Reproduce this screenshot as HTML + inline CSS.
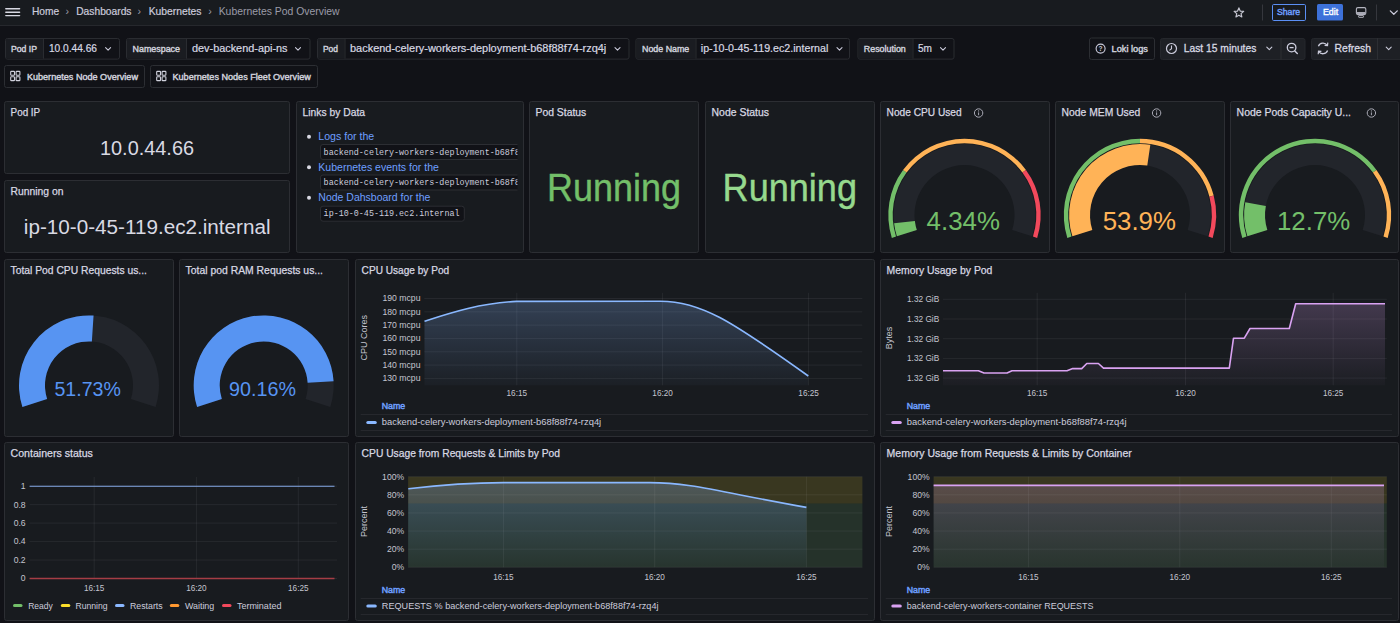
<!DOCTYPE html>
<html><head><meta charset="utf-8"><title>Kubernetes Pod Overview</title>
<style>html,body{margin:0;padding:0;background:#111217;overflow:hidden;width:1400px;height:623px}svg{display:block}text{white-space:pre}</style>
</head><body>
<svg width="1400" height="623" viewBox="0 0 1400 623"><rect x="0" y="0" width="1400" height="623" fill="#111217"/>
<rect x="0" y="0" width="1400" height="25" rx="0" fill="#181b1f" />
<line x1="0" y1="25.5" x2="1400" y2="25.5" stroke="#26282d" stroke-width="1" />
<line x1="5.8" y1="8.8" x2="19.6" y2="8.8" stroke="#d8d9e3" stroke-width="1.4" stroke-linecap="round"/>
<line x1="5.8" y1="12.2" x2="19.6" y2="12.2" stroke="#d8d9e3" stroke-width="1.4" stroke-linecap="round"/>
<line x1="5.8" y1="15.6" x2="19.6" y2="15.6" stroke="#d8d9e3" stroke-width="1.4" stroke-linecap="round"/>
<text x="31.9" y="15.3" font-family="Liberation Sans" font-size="10.6" fill="#ccccdc" font-weight="400" text-anchor="start" textLength="27.20" lengthAdjust="spacingAndGlyphs" stroke="#ccccdc" stroke-width="0.2">Home</text>
<text x="65.5" y="15.3" font-family="Liberation Sans" font-size="10.6" fill="#9b9ca8" font-weight="400" text-anchor="start" >›</text>
<text x="76.2" y="15.3" font-family="Liberation Sans" font-size="10.6" fill="#ccccdc" font-weight="400" text-anchor="start" textLength="55.30" lengthAdjust="spacingAndGlyphs" stroke="#ccccdc" stroke-width="0.2">Dashboards</text>
<text x="137.6" y="15.3" font-family="Liberation Sans" font-size="10.6" fill="#9b9ca8" font-weight="400" text-anchor="start" >›</text>
<text x="148.7" y="15.3" font-family="Liberation Sans" font-size="10.6" fill="#ccccdc" font-weight="400" text-anchor="start" textLength="52.80" lengthAdjust="spacingAndGlyphs" stroke="#ccccdc" stroke-width="0.2">Kubernetes</text>
<text x="208.3" y="15.3" font-family="Liberation Sans" font-size="10.6" fill="#9b9ca8" font-weight="400" text-anchor="start" >›</text>
<text x="218.7" y="15.3" font-family="Liberation Sans" font-size="10.6" fill="#9b9ca8" font-weight="400" text-anchor="start" textLength="120.80" lengthAdjust="spacingAndGlyphs" >Kubernetes Pod Overview</text>
<polygon points="1238.90,7.90 1240.22,11.08 1243.66,11.35 1241.04,13.60 1241.84,16.95 1238.90,15.15 1235.96,16.95 1236.76,13.60 1234.14,11.35 1237.58,11.08" fill="none" stroke="#c4c5d0" stroke-width="1.2" stroke-linejoin="round"/>
<line x1="1262.5" y1="4.5" x2="1262.5" y2="20.5" stroke="#35373d" stroke-width="1" />
<rect x="1272.5" y="4.5" width="33" height="16" rx="1.2" fill="none" stroke="#5b8ff5" stroke-width="1" />
<text x="1276.9" y="15.4" font-family="Liberation Sans" font-size="8.4" fill="#6e9fff" font-weight="400" text-anchor="start" textLength="23.30" lengthAdjust="spacingAndGlyphs" stroke="#6e9fff" stroke-width="0.4">Share</text>
<rect x="1317" y="4" width="26" height="16.6" rx="1.5" fill="#3d71d9" />
<text x="1322.9" y="15.4" font-family="Liberation Sans" font-size="8.8" fill="#ffffff" font-weight="400" text-anchor="start" textLength="15.20" lengthAdjust="spacingAndGlyphs" stroke="#ffffff" stroke-width="0.35">Edit</text>
<rect x="1356.4" y="7.6" width="9.4" height="7" rx="1.5" fill="none" stroke="#b4b5c0" stroke-width="1.1"/>
<rect x="1356.8" y="12" width="8.6" height="2.1" fill="#a9aab5"/>
<rect x="1358.6" y="15.6" width="4.9" height="1.8" rx="0.5" fill="none" stroke="#b4b5c0" stroke-width="0.9"/>
<line x1="1376.5" y1="4.5" x2="1376.5" y2="20.5" stroke="#35373d" stroke-width="1" />
<polyline points="1390.3,10.9 1393.8,14.2 1397.3,10.9" fill="none" stroke="#ccccdc" stroke-width="1.3" stroke-linecap="round" stroke-linejoin="round"/>
<rect x="5.5" y="38.5" width="114" height="20.6" rx="2" fill="#111217" stroke="#2a2c31" stroke-width="1" />
<rect x="6" y="39" width="37" height="19.6" fill="#1a1c21"/>
<line x1="43.5" y1="39" x2="43.5" y2="58.6" stroke="#2a2c31" stroke-width="1" />
<text x="11" y="51.9" font-family="Liberation Sans" font-size="8.6" fill="#d0d1dc" font-weight="400" text-anchor="start" textLength="26.00" lengthAdjust="spacingAndGlyphs" stroke="#d0d1dc" stroke-width="0.4">Pod IP</text>
<text x="48.9" y="52.0" font-family="Liberation Sans" font-size="10.8" fill="#d8d9e3" font-weight="400" text-anchor="start" textLength="48.10" lengthAdjust="spacingAndGlyphs" stroke="#d8d9e3" stroke-width="0.2">10.0.44.66</text>
<polyline points="105.60,47.70 108.10,50.10 110.60,47.70" fill="none" stroke="#ccccdc" stroke-width="1.1" stroke-linecap="round" stroke-linejoin="round"/>
<rect x="126.5" y="38.5" width="183.5" height="20.6" rx="2" fill="#111217" stroke="#2a2c31" stroke-width="1" />
<rect x="127" y="39" width="59" height="19.6" fill="#1a1c21"/>
<line x1="186.5" y1="39" x2="186.5" y2="58.6" stroke="#2a2c31" stroke-width="1" />
<text x="132.5" y="51.9" font-family="Liberation Sans" font-size="8.6" fill="#d0d1dc" font-weight="400" text-anchor="start" textLength="47.50" lengthAdjust="spacingAndGlyphs" stroke="#d0d1dc" stroke-width="0.4">Namespace</text>
<text x="192" y="52.0" font-family="Liberation Sans" font-size="10.8" fill="#d8d9e3" font-weight="400" text-anchor="start" textLength="95.50" lengthAdjust="spacingAndGlyphs" stroke="#d8d9e3" stroke-width="0.2">dev-backend-api-ns</text>
<polyline points="295.50,47.70 298.00,50.10 300.50,47.70" fill="none" stroke="#ccccdc" stroke-width="1.1" stroke-linecap="round" stroke-linejoin="round"/>
<rect x="317.5" y="38.5" width="311.5" height="20.6" rx="2" fill="#111217" stroke="#2a2c31" stroke-width="1" />
<rect x="318" y="39" width="26.5" height="19.6" fill="#1a1c21"/>
<line x1="345.0" y1="39" x2="345.0" y2="58.6" stroke="#2a2c31" stroke-width="1" />
<text x="323" y="51.9" font-family="Liberation Sans" font-size="8.6" fill="#d0d1dc" font-weight="400" text-anchor="start" textLength="15.00" lengthAdjust="spacingAndGlyphs" stroke="#d0d1dc" stroke-width="0.4">Pod</text>
<text x="350" y="52.0" font-family="Liberation Sans" font-size="10.8" fill="#d8d9e3" font-weight="400" text-anchor="start" textLength="256.30" lengthAdjust="spacingAndGlyphs" stroke="#d8d9e3" stroke-width="0.2">backend-celery-workers-deployment-b68f88f74-rzq4j</text>
<polyline points="615.00,47.70 617.50,50.10 620.00,47.70" fill="none" stroke="#ccccdc" stroke-width="1.1" stroke-linecap="round" stroke-linejoin="round"/>
<rect x="636.0" y="38.5" width="213.5" height="20.6" rx="2" fill="#111217" stroke="#2a2c31" stroke-width="1" />
<rect x="636.5" y="39" width="59.0" height="19.6" fill="#1a1c21"/>
<line x1="696.0" y1="39" x2="696.0" y2="58.6" stroke="#2a2c31" stroke-width="1" />
<text x="642" y="51.9" font-family="Liberation Sans" font-size="8.6" fill="#d0d1dc" font-weight="400" text-anchor="start" textLength="47.30" lengthAdjust="spacingAndGlyphs" stroke="#d0d1dc" stroke-width="0.4">Node Name</text>
<text x="700.8" y="52.0" font-family="Liberation Sans" font-size="10.8" fill="#d8d9e3" font-weight="400" text-anchor="start" textLength="127.50" lengthAdjust="spacingAndGlyphs" stroke="#d8d9e3" stroke-width="0.2">ip-10-0-45-119.ec2.internal</text>
<polyline points="837.00,47.70 839.50,50.10 842.00,47.70" fill="none" stroke="#ccccdc" stroke-width="1.1" stroke-linecap="round" stroke-linejoin="round"/>
<rect x="858.0" y="38.5" width="96.0" height="20.6" rx="2" fill="#111217" stroke="#2a2c31" stroke-width="1" />
<rect x="858.5" y="39" width="54.0" height="19.6" fill="#1a1c21"/>
<line x1="913.0" y1="39" x2="913.0" y2="58.6" stroke="#2a2c31" stroke-width="1" />
<text x="863.8" y="51.9" font-family="Liberation Sans" font-size="8.6" fill="#d0d1dc" font-weight="400" text-anchor="start" textLength="42.00" lengthAdjust="spacingAndGlyphs" stroke="#d0d1dc" stroke-width="0.4">Resolution</text>
<text x="918" y="52.0" font-family="Liberation Sans" font-size="10.8" fill="#d8d9e3" font-weight="400" text-anchor="start" textLength="14.00" lengthAdjust="spacingAndGlyphs" stroke="#d8d9e3" stroke-width="0.2">5m</text>
<polyline points="940.50,47.70 943.00,50.10 945.50,47.70" fill="none" stroke="#ccccdc" stroke-width="1.1" stroke-linecap="round" stroke-linejoin="round"/>
<rect x="1089.5" y="38" width="65" height="21.5" rx="2" fill="#111217" stroke="#2c2e33" stroke-width="1" />
<circle cx="1100.6" cy="48.6" r="4.5" fill="none" stroke="#ccccdc" stroke-width="1.1"/>
<text x="1098.4" y="51.2" font-family="Liberation Sans" font-size="6.6" fill="#ccccdc" font-weight="700" text-anchor="start" >?</text>
<text x="1111.5" y="52" font-family="Liberation Sans" font-size="8.8" fill="#d0d1dc" font-weight="400" text-anchor="start" textLength="36.50" lengthAdjust="spacingAndGlyphs" stroke="#d0d1dc" stroke-width="0.4">Loki logs</text>
<rect x="1160.5" y="38.5" width="144.5" height="21" rx="2" fill="#1e2025" stroke="#25272c" stroke-width="1" />
<line x1="1281" y1="38" x2="1281" y2="59.6" stroke="#2c2e33" stroke-width="1" />
<circle cx="1171.5" cy="48.5" r="5" fill="none" stroke="#ccccdc" stroke-width="1.2"/>
<polyline points="1171.5,45.5 1171.5,48.7 1169.4,50.4" fill="none" stroke="#ccccdc" stroke-width="1.1"/>
<text x="1183.8" y="52.2" font-family="Liberation Sans" font-size="10.8" fill="#d8d9e3" font-weight="400" text-anchor="start" textLength="72.50" lengthAdjust="spacingAndGlyphs" stroke="#d8d9e3" stroke-width="0.3">Last 15 minutes</text>
<polyline points="1266.80,47.20 1269.30,49.60 1271.80,47.20" fill="none" stroke="#ccccdc" stroke-width="1.1" stroke-linecap="round" stroke-linejoin="round"/>
<circle cx="1291.6" cy="47.6" r="4.3" fill="none" stroke="#ccccdc" stroke-width="1.3"/>
<line x1="1289.6" y1="47.6" x2="1293.6" y2="47.6" stroke="#ccccdc" stroke-width="1.3" />
<line x1="1294.8" y1="50.9" x2="1297.3" y2="53.5" stroke="#ccccdc" stroke-width="1.4" stroke-linecap="round"/>
<rect x="1311.5" y="38.5" width="100" height="21" rx="2" fill="#1e2025" stroke="#25272c" stroke-width="1" />
<line x1="1377.5" y1="38" x2="1377.5" y2="59.6" stroke="#2c2e33" stroke-width="1" />
<path d="M1318.4,46.2 A5,5 0 0 1 1327.2,45.3 M1327.6,50.6 A5,5 0 0 1 1318.8,51.5" fill="none" stroke="#ccccdc" stroke-width="1.3"/>
<polyline points="1327.8,42.6 1327.5,45.6 1324.6,45.4" fill="none" stroke="#ccccdc" stroke-width="1.2"/>
<polyline points="1318.2,54.2 1318.5,51.2 1321.4,51.4" fill="none" stroke="#ccccdc" stroke-width="1.2"/>
<text x="1334.6" y="52.1" font-family="Liberation Sans" font-size="10.8" fill="#d8d9e3" font-weight="400" text-anchor="start" textLength="36.40" lengthAdjust="spacingAndGlyphs" stroke="#d8d9e3" stroke-width="0.3">Refresh</text>
<polyline points="1386.20,47.20 1388.70,49.60 1391.20,47.20" fill="none" stroke="#ccccdc" stroke-width="1.1" stroke-linecap="round" stroke-linejoin="round"/>
<rect x="4.5" y="65.5" width="140" height="22" rx="2" fill="#111217" stroke="#2c2e33" stroke-width="1" />
<rect x="10.7" y="71.4" width="3.8" height="3.8" rx="0.7" fill="none" stroke="#d0d1dc" stroke-width="1.1"/>
<rect x="10.7" y="76.80000000000001" width="3.8" height="3.8" rx="0.7" fill="none" stroke="#d0d1dc" stroke-width="1.1"/>
<rect x="16.1" y="71.4" width="3.8" height="3.8" rx="0.7" fill="none" stroke="#d0d1dc" stroke-width="1.1"/>
<rect x="16.1" y="76.80000000000001" width="3.8" height="3.8" rx="0.7" fill="none" stroke="#d0d1dc" stroke-width="1.1"/>
<text x="26.9" y="79.6" font-family="Liberation Sans" font-size="8.6" fill="#d0d1dc" font-weight="400" text-anchor="start" textLength="111.10" lengthAdjust="spacingAndGlyphs" stroke="#d0d1dc" stroke-width="0.4">Kubernetes Node Overview</text>
<rect x="150.5" y="65.5" width="167" height="22" rx="2" fill="#111217" stroke="#2c2e33" stroke-width="1" />
<rect x="156.7" y="71.4" width="3.8" height="3.8" rx="0.7" fill="none" stroke="#d0d1dc" stroke-width="1.1"/>
<rect x="156.7" y="76.80000000000001" width="3.8" height="3.8" rx="0.7" fill="none" stroke="#d0d1dc" stroke-width="1.1"/>
<rect x="162.1" y="71.4" width="3.8" height="3.8" rx="0.7" fill="none" stroke="#d0d1dc" stroke-width="1.1"/>
<rect x="162.1" y="76.80000000000001" width="3.8" height="3.8" rx="0.7" fill="none" stroke="#d0d1dc" stroke-width="1.1"/>
<text x="172.5" y="79.6" font-family="Liberation Sans" font-size="8.6" fill="#d0d1dc" font-weight="400" text-anchor="start" textLength="138.30" lengthAdjust="spacingAndGlyphs" stroke="#d0d1dc" stroke-width="0.4">Kubernetes Nodes Fleet Overview</text>
<rect x="4.5" y="101.5" width="285" height="72" rx="2" fill="#181b1f" stroke="#2c2e33" stroke-width="1" />
<text x="10.6" y="115.6" font-family="Liberation Sans" font-size="10.6" fill="#d8d9e3" font-weight="400" text-anchor="start" textLength="29.60" lengthAdjust="spacingAndGlyphs" stroke="#d8d9e3" stroke-width="0.25">Pod IP</text>
<text x="100" y="155.4" font-family="Liberation Sans" font-size="20" fill="#d8d9e3" font-weight="400" text-anchor="start" textLength="94.00" lengthAdjust="spacingAndGlyphs" >10.0.44.66</text>
<rect x="4.5" y="180.5" width="285" height="72" rx="2" fill="#181b1f" stroke="#2c2e33" stroke-width="1" />
<text x="10.6" y="194.6" font-family="Liberation Sans" font-size="10.6" fill="#d8d9e3" font-weight="400" text-anchor="start" textLength="52.90" lengthAdjust="spacingAndGlyphs" stroke="#d8d9e3" stroke-width="0.25">Running on</text>
<text x="23.8" y="234" font-family="Liberation Sans" font-size="20" fill="#d8d9e3" font-weight="400" text-anchor="start" textLength="246.80" lengthAdjust="spacingAndGlyphs" >ip-10-0-45-119.ec2.internal</text>
<rect x="296.5" y="101.5" width="227" height="151" rx="2" fill="#181b1f" stroke="#2c2e33" stroke-width="1" />
<text x="302.6" y="115.6" font-family="Liberation Sans" font-size="10.6" fill="#d8d9e3" font-weight="400" text-anchor="start" textLength="62.40" lengthAdjust="spacingAndGlyphs" stroke="#d8d9e3" stroke-width="0.25">Links by Data</text>
<defs><clipPath id="lk"><rect x="297" y="102" width="220.5" height="150"/></clipPath></defs>
<circle cx="309" cy="136.8" r="2" fill="#d8d9e3"/>
<text x="318.3" y="140" font-family="Liberation Sans" font-size="10" fill="#6e9fff" font-weight="400" text-anchor="start" textLength="55.90" lengthAdjust="spacingAndGlyphs" >Logs for the</text>
<g clip-path="url(#lk)">
<rect x="320.5" y="144.5" width="220" height="15" rx="2.5" fill="#111217" stroke="#2c2e33" stroke-width="1" />
<text x="323.6" y="154.6" font-family="Liberation Mono" font-size="8.6" fill="#ccccdc" font-weight="400" text-anchor="start" textLength="246.63" lengthAdjust="spacingAndGlyphs" >backend-celery-workers-deployment-b68f88f74-rzq4j</text>
</g>
<circle cx="309" cy="167.3" r="2" fill="#d8d9e3"/>
<text x="318.3" y="170.5" font-family="Liberation Sans" font-size="10" fill="#6e9fff" font-weight="400" text-anchor="start" textLength="120.60" lengthAdjust="spacingAndGlyphs" >Kubernetes events for the</text>
<g clip-path="url(#lk)">
<rect x="320.5" y="175.0" width="220" height="15" rx="2.5" fill="#111217" stroke="#2c2e33" stroke-width="1" />
<text x="323.6" y="185.1" font-family="Liberation Mono" font-size="8.6" fill="#ccccdc" font-weight="400" text-anchor="start" textLength="246.63" lengthAdjust="spacingAndGlyphs" >backend-celery-workers-deployment-b68f88f74-rzq4j</text>
</g>
<circle cx="309" cy="197.8" r="2" fill="#d8d9e3"/>
<text x="318.3" y="201" font-family="Liberation Sans" font-size="10" fill="#6e9fff" font-weight="400" text-anchor="start" textLength="112.10" lengthAdjust="spacingAndGlyphs" >Node Dahsboard for the</text>
<g clip-path="url(#lk)">
<rect x="320.5" y="206.2" width="143.8" height="15" rx="2.5" fill="#111217" stroke="#2c2e33" stroke-width="1" />
<text x="323.6" y="216.29999999999998" font-family="Liberation Mono" font-size="8.6" fill="#ccccdc" font-weight="400" text-anchor="start" textLength="135.90" lengthAdjust="spacingAndGlyphs" >ip-10-0-45-119.ec2.internal</text>
</g>
<rect x="529.5" y="101.5" width="169" height="151" rx="2" fill="#181b1f" stroke="#2c2e33" stroke-width="1" />
<text x="535.6" y="115.6" font-family="Liberation Sans" font-size="10.6" fill="#d8d9e3" font-weight="400" text-anchor="start" textLength="50.60" lengthAdjust="spacingAndGlyphs" stroke="#d8d9e3" stroke-width="0.25">Pod Status</text>
<text x="547" y="201" font-family="Liberation Sans" font-size="38" fill="#73bf69" font-weight="400" text-anchor="start" textLength="134.00" lengthAdjust="spacingAndGlyphs" stroke="#73bf69" stroke-width="0.4">Running</text>
<rect x="705.5" y="101.5" width="169" height="151" rx="2" fill="#181b1f" stroke="#2c2e33" stroke-width="1" />
<text x="711.6" y="115.6" font-family="Liberation Sans" font-size="10.6" fill="#d8d9e3" font-weight="400" text-anchor="start" textLength="57.40" lengthAdjust="spacingAndGlyphs" stroke="#d8d9e3" stroke-width="0.25">Node Status</text>
<text x="722.6" y="201" font-family="Liberation Sans" font-size="38" fill="#96d98d" font-weight="400" text-anchor="start" textLength="134.40" lengthAdjust="spacingAndGlyphs" stroke="#96d98d" stroke-width="0.4">Running</text>
<rect x="880.5" y="101.5" width="169" height="151" rx="2" fill="#181b1f" stroke="#2c2e33" stroke-width="1" />
<text x="886.6" y="115.6" font-family="Liberation Sans" font-size="10.6" fill="#d8d9e3" font-weight="400" text-anchor="start" textLength="75.00" lengthAdjust="spacingAndGlyphs" stroke="#d8d9e3" stroke-width="0.25">Node CPU Used</text>
<circle cx="978.6" cy="113" r="4.2" fill="none" stroke="#a8a9b4" stroke-width="1"/>
<rect x="978.1" y="112.4" width="1" height="2.8" fill="#a8a9b4"/>
<circle cx="978.6" cy="110.9" r="0.6" fill="#a8a9b4"/>
<path d="M891.83,237.91 A76.2,76.2 0 0 1 903.05,169.94 L906.60,172.54 A71.8,71.8 0 0 0 896.02,236.59 Z" fill="#73bf69"/>
<path d="M903.05,169.94 A76.2,76.2 0 0 1 1025.95,169.94 L1022.40,172.54 A71.8,71.8 0 0 0 906.60,172.54 Z" fill="#ffb357"/>
<path d="M1025.95,169.94 A76.2,76.2 0 0 1 1037.17,237.91 L1032.98,236.59 A71.8,71.8 0 0 0 1022.40,172.54 Z" fill="#f2495c"/>
<path d="M896.88,236.32 A70.9,70.9 0 1 1 1032.12,236.32 L1012.19,230.04 A50,50 0 1 0 916.81,230.04 Z" fill="#22252b"/>
<path d="M896.88,236.32 A70.9,70.9 0 0 1 894.09,223.33 L914.85,220.88 A50,50 0 0 0 916.81,230.04 Z" fill="#73bf69"/>
<text x="926.6" y="230" font-family="Liberation Sans" font-size="26" fill="#73bf69" font-weight="400" text-anchor="start" textLength="73.40" lengthAdjust="spacingAndGlyphs" >4.34%</text>
<rect x="1055.5" y="101.5" width="169" height="151" rx="2" fill="#181b1f" stroke="#2c2e33" stroke-width="1" />
<text x="1061.6" y="115.6" font-family="Liberation Sans" font-size="10.6" fill="#d8d9e3" font-weight="400" text-anchor="start" textLength="78.70" lengthAdjust="spacingAndGlyphs" stroke="#d8d9e3" stroke-width="0.25">Node MEM Used</text>
<circle cx="1156.6" cy="113" r="4.2" fill="none" stroke="#a8a9b4" stroke-width="1"/>
<rect x="1156.1" y="112.4" width="1" height="2.8" fill="#a8a9b4"/>
<circle cx="1156.6" cy="110.9" r="0.6" fill="#a8a9b4"/>
<path d="M1067.33,237.91 A76.2,76.2 0 0 1 1140.00,138.80 L1140.00,143.20 A71.8,71.8 0 0 0 1071.52,236.59 Z" fill="#73bf69"/>
<path d="M1140.00,138.80 A76.2,76.2 0 0 1 1213.69,195.60 L1209.43,196.72 A71.8,71.8 0 0 0 1140.00,143.20 Z" fill="#ffb357"/>
<path d="M1213.69,195.60 A76.2,76.2 0 0 1 1212.67,237.91 L1208.48,236.59 A71.8,71.8 0 0 0 1209.43,196.72 Z" fill="#f2495c"/>
<path d="M1072.38,236.32 A70.9,70.9 0 1 1 1207.62,236.32 L1187.69,230.04 A50,50 0 1 0 1092.31,230.04 Z" fill="#22252b"/>
<path d="M1072.38,236.32 A70.9,70.9 0 0 1 1150.34,144.86 L1147.29,165.53 A50,50 0 0 0 1092.31,230.04 Z" fill="#ffb357"/>
<text x="1102.7" y="230" font-family="Liberation Sans" font-size="26" fill="#ffb357" font-weight="400" text-anchor="start" textLength="73.30" lengthAdjust="spacingAndGlyphs" >53.9%</text>
<rect x="1230.5" y="101.5" width="168" height="151" rx="2" fill="#181b1f" stroke="#2c2e33" stroke-width="1" />
<text x="1236.6" y="115.6" font-family="Liberation Sans" font-size="10.6" fill="#d8d9e3" font-weight="400" text-anchor="start" textLength="114.40" lengthAdjust="spacingAndGlyphs" stroke="#d8d9e3" stroke-width="0.25">Node Pods Capacity U...</text>
<circle cx="1371.4" cy="113" r="4.2" fill="none" stroke="#a8a9b4" stroke-width="1"/>
<rect x="1370.9" y="112.4" width="1" height="2.8" fill="#a8a9b4"/>
<circle cx="1371.4" cy="110.9" r="0.6" fill="#a8a9b4"/>
<path d="M1242.33,237.91 A76.2,76.2 0 0 1 1376.45,169.94 L1372.90,172.54 A71.8,71.8 0 0 0 1246.52,236.59 Z" fill="#73bf69"/>
<path d="M1376.45,169.94 A76.2,76.2 0 0 1 1387.67,237.91 L1383.48,236.59 A71.8,71.8 0 0 0 1372.90,172.54 Z" fill="#ffb357"/>
<path d="M1247.38,236.32 A70.9,70.9 0 1 1 1382.62,236.32 L1362.69,230.04 A50,50 0 1 0 1267.31,230.04 Z" fill="#22252b"/>
<path d="M1247.38,236.32 A70.9,70.9 0 0 1 1245.28,202.14 L1265.83,205.93 A50,50 0 0 0 1267.31,230.04 Z" fill="#73bf69"/>
<text x="1277" y="230" font-family="Liberation Sans" font-size="26" fill="#73bf69" font-weight="400" text-anchor="start" textLength="73.30" lengthAdjust="spacingAndGlyphs" >12.7%</text>
<rect x="4.5" y="259.5" width="169" height="177" rx="2" fill="#181b1f" stroke="#2c2e33" stroke-width="1" />
<text x="10.6" y="273.6" font-family="Liberation Sans" font-size="10.6" fill="#d8d9e3" font-weight="400" text-anchor="start" textLength="136.30" lengthAdjust="spacingAndGlyphs" stroke="#d8d9e3" stroke-width="0.25">Total Pod CPU Requests us...</text>
<path d="M22.39,406.91 A70,70 0 1 1 155.61,406.91 L130.87,398.92 A44,44 0 1 0 47.13,398.92 Z" fill="#22252b"/>
<path d="M22.39,406.91 A70,70 0 0 1 93.56,315.55 L91.86,341.49 A44,44 0 0 0 47.13,398.92 Z" fill="#5794f2"/>
<text x="54.4" y="396.3" font-family="Liberation Sans" font-size="20.5" fill="#5794f2" font-weight="400" text-anchor="start" textLength="66.50" lengthAdjust="spacingAndGlyphs" >51.73%</text>
<rect x="179.5" y="259.5" width="169" height="177" rx="2" fill="#181b1f" stroke="#2c2e33" stroke-width="1" />
<text x="185.6" y="273.6" font-family="Liberation Sans" font-size="10.6" fill="#d8d9e3" font-weight="400" text-anchor="start" textLength="137.40" lengthAdjust="spacingAndGlyphs" stroke="#d8d9e3" stroke-width="0.25">Total pod RAM Requests us...</text>
<path d="M197.09,406.91 A70,70 0 1 1 330.31,406.91 L305.57,398.92 A44,44 0 1 0 221.83,398.92 Z" fill="#22252b"/>
<path d="M197.09,406.91 A70,70 0 1 1 333.58,381.33 L307.63,382.84 A44,44 0 1 0 221.83,398.92 Z" fill="#5794f2"/>
<text x="229.1" y="396.3" font-family="Liberation Sans" font-size="20.5" fill="#5794f2" font-weight="400" text-anchor="start" textLength="66.80" lengthAdjust="spacingAndGlyphs" >90.16%</text>
<rect x="355.5" y="259.5" width="519" height="177" rx="2" fill="#181b1f" stroke="#2c2e33" stroke-width="1" />
<text x="361.6" y="273.6" font-family="Liberation Sans" font-size="10.6" fill="#d8d9e3" font-weight="400" text-anchor="start" textLength="87.60" lengthAdjust="spacingAndGlyphs" stroke="#d8d9e3" stroke-width="0.25">CPU Usage by Pod</text>
<line x1="424.3" y1="298.5" x2="862.3" y2="298.5" stroke="rgba(204,204,220,0.08)" stroke-width="1" />
<line x1="424.3" y1="311.82" x2="862.3" y2="311.82" stroke="rgba(204,204,220,0.08)" stroke-width="1" />
<line x1="424.3" y1="325.14" x2="862.3" y2="325.14" stroke="rgba(204,204,220,0.08)" stroke-width="1" />
<line x1="424.3" y1="338.46" x2="862.3" y2="338.46" stroke="rgba(204,204,220,0.08)" stroke-width="1" />
<line x1="424.3" y1="351.78" x2="862.3" y2="351.78" stroke="rgba(204,204,220,0.08)" stroke-width="1" />
<line x1="424.3" y1="365.1" x2="862.3" y2="365.1" stroke="rgba(204,204,220,0.08)" stroke-width="1" />
<line x1="424.3" y1="378.42" x2="862.3" y2="378.42" stroke="rgba(204,204,220,0.08)" stroke-width="1" />
<line x1="516.8" y1="292.8" x2="516.8" y2="385.3" stroke="rgba(204,204,220,0.08)" stroke-width="1" />
<line x1="662.6" y1="292.8" x2="662.6" y2="385.3" stroke="rgba(204,204,220,0.08)" stroke-width="1" />
<line x1="808.6" y1="292.8" x2="808.6" y2="385.3" stroke="rgba(204,204,220,0.08)" stroke-width="1" />
<text x="382.5" y="301.4" font-family="Liberation Sans" font-size="8.6" fill="#c4c5cf" font-weight="400" text-anchor="start" textLength="38.00" lengthAdjust="spacingAndGlyphs" >190 mcpu</text>
<text x="382.5" y="314.71999999999997" font-family="Liberation Sans" font-size="8.6" fill="#c4c5cf" font-weight="400" text-anchor="start" textLength="38.00" lengthAdjust="spacingAndGlyphs" >180 mcpu</text>
<text x="382.5" y="328.03999999999996" font-family="Liberation Sans" font-size="8.6" fill="#c4c5cf" font-weight="400" text-anchor="start" textLength="38.00" lengthAdjust="spacingAndGlyphs" >170 mcpu</text>
<text x="382.5" y="341.35999999999996" font-family="Liberation Sans" font-size="8.6" fill="#c4c5cf" font-weight="400" text-anchor="start" textLength="38.00" lengthAdjust="spacingAndGlyphs" >160 mcpu</text>
<text x="382.5" y="354.67999999999995" font-family="Liberation Sans" font-size="8.6" fill="#c4c5cf" font-weight="400" text-anchor="start" textLength="38.00" lengthAdjust="spacingAndGlyphs" >150 mcpu</text>
<text x="382.5" y="368.0" font-family="Liberation Sans" font-size="8.6" fill="#c4c5cf" font-weight="400" text-anchor="start" textLength="38.00" lengthAdjust="spacingAndGlyphs" >140 mcpu</text>
<text x="382.5" y="381.32" font-family="Liberation Sans" font-size="8.6" fill="#c4c5cf" font-weight="400" text-anchor="start" textLength="38.00" lengthAdjust="spacingAndGlyphs" >130 mcpu</text>
<text x="516.8" y="396" font-family="Liberation Sans" font-size="8.2" fill="#c4c5cf" font-weight="400" text-anchor="middle" >16:15</text>
<text x="662.6" y="396" font-family="Liberation Sans" font-size="8.2" fill="#c4c5cf" font-weight="400" text-anchor="middle" >16:20</text>
<text x="808.6" y="396" font-family="Liberation Sans" font-size="8.2" fill="#c4c5cf" font-weight="400" text-anchor="middle" >16:25</text>
<text x="364.3" y="337.8" font-family="Liberation Sans" font-size="9.0" fill="#c4c5cf" text-anchor="middle" transform="rotate(-90 364.3 337.8)" dy="2.9">CPU Cores</text>
<defs><linearGradient id="gb" x1="0" y1="0" x2="0" y2="1"><stop offset="0" stop-color="#8ab8ff" stop-opacity="0.24"/><stop offset="1" stop-color="#8ab8ff" stop-opacity="0.03"/></linearGradient><linearGradient id="gp" x1="0" y1="0" x2="0" y2="1"><stop offset="0" stop-color="#d9a2f2" stop-opacity="0.22"/><stop offset="1" stop-color="#d9a2f2" stop-opacity="0.02"/></linearGradient><linearGradient id="gb2" x1="0" y1="0" x2="0" y2="1"><stop offset="0" stop-color="#8ab8ff" stop-opacity="0.26"/><stop offset="1" stop-color="#8ab8ff" stop-opacity="0.02"/></linearGradient><linearGradient id="gp2" x1="0" y1="0" x2="0" y2="1"><stop offset="0" stop-color="#d9a2f2" stop-opacity="0.2"/><stop offset="1" stop-color="#d9a2f2" stop-opacity="0.02"/></linearGradient></defs>
<path d="M424.5,321.2 C450,313 480,303 516.5,301.4 L660,301.2 C700,301 730,320 808.3,376 L808.3,385.3 L424.5,385.3 Z" fill="url(#gb)"/>
<path d="M424.5,321.2 C450,313 480,303 516.5,301.4 L660,301.2 C700,301 730,320 808.3,376" fill="none" stroke="#8ab8ff" stroke-width="1.6"/>
<text x="381.7" y="409" font-family="Liberation Sans" font-size="8.4" fill="#6e9fff" font-weight="400" text-anchor="start" textLength="23.50" lengthAdjust="spacingAndGlyphs" stroke="#6e9fff" stroke-width="0.45">Name</text>
<line x1="360.7" y1="414.5" x2="868" y2="414.5" stroke="#26282d" stroke-width="1" />
<rect x="366.3" y="420.90000000000003" width="10.5" height="3.2" rx="1.6" fill="#8ab8ff"/>
<text x="381.8" y="425.3" font-family="Liberation Sans" font-size="8.2" fill="#ccccdc" font-weight="400" text-anchor="start" textLength="219.40" lengthAdjust="spacingAndGlyphs" >backend-celery-workers-deployment-b68f88f74-rzq4j</text>
<line x1="360.7" y1="430.5" x2="868" y2="430.5" stroke="#26282d" stroke-width="1" />
<rect x="880.5" y="259.5" width="518" height="177" rx="2" fill="#181b1f" stroke="#2c2e33" stroke-width="1" />
<text x="886.6" y="273.6" font-family="Liberation Sans" font-size="10.6" fill="#d8d9e3" font-weight="400" text-anchor="start" textLength="105.80" lengthAdjust="spacingAndGlyphs" stroke="#d8d9e3" stroke-width="0.25">Memory Usage by Pod</text>
<line x1="943" y1="299.3" x2="1386.8" y2="299.3" stroke="rgba(204,204,220,0.08)" stroke-width="1" />
<line x1="943" y1="319" x2="1386.8" y2="319" stroke="rgba(204,204,220,0.08)" stroke-width="1" />
<line x1="943" y1="338.7" x2="1386.8" y2="338.7" stroke="rgba(204,204,220,0.08)" stroke-width="1" />
<line x1="943" y1="358.4" x2="1386.8" y2="358.4" stroke="rgba(204,204,220,0.08)" stroke-width="1" />
<line x1="943" y1="378.1" x2="1386.8" y2="378.1" stroke="rgba(204,204,220,0.08)" stroke-width="1" />
<line x1="1037.2" y1="292.8" x2="1037.2" y2="385.3" stroke="rgba(204,204,220,0.08)" stroke-width="1" />
<line x1="1185.5" y1="292.8" x2="1185.5" y2="385.3" stroke="rgba(204,204,220,0.08)" stroke-width="1" />
<line x1="1333.2" y1="292.8" x2="1333.2" y2="385.3" stroke="rgba(204,204,220,0.08)" stroke-width="1" />
<text x="907" y="302.2" font-family="Liberation Sans" font-size="8.6" fill="#c4c5cf" font-weight="400" text-anchor="start" textLength="32.20" lengthAdjust="spacingAndGlyphs" >1.32 GiB</text>
<text x="907" y="321.9" font-family="Liberation Sans" font-size="8.6" fill="#c4c5cf" font-weight="400" text-anchor="start" textLength="32.20" lengthAdjust="spacingAndGlyphs" >1.32 GiB</text>
<text x="907" y="341.59999999999997" font-family="Liberation Sans" font-size="8.6" fill="#c4c5cf" font-weight="400" text-anchor="start" textLength="32.20" lengthAdjust="spacingAndGlyphs" >1.32 GiB</text>
<text x="907" y="361.29999999999995" font-family="Liberation Sans" font-size="8.6" fill="#c4c5cf" font-weight="400" text-anchor="start" textLength="32.20" lengthAdjust="spacingAndGlyphs" >1.32 GiB</text>
<text x="907" y="381.0" font-family="Liberation Sans" font-size="8.6" fill="#c4c5cf" font-weight="400" text-anchor="start" textLength="32.20" lengthAdjust="spacingAndGlyphs" >1.32 GiB</text>
<text x="1037.2" y="396" font-family="Liberation Sans" font-size="8.2" fill="#c4c5cf" font-weight="400" text-anchor="middle" >16:15</text>
<text x="1185.5" y="396" font-family="Liberation Sans" font-size="8.2" fill="#c4c5cf" font-weight="400" text-anchor="middle" >16:20</text>
<text x="1333.2" y="396" font-family="Liberation Sans" font-size="8.2" fill="#c4c5cf" font-weight="400" text-anchor="middle" >16:25</text>
<text x="889.5" y="338" font-family="Liberation Sans" font-size="9.0" fill="#c4c5cf" text-anchor="middle" transform="rotate(-90 889.5 338)" dy="2.9">Bytes</text>
<path d="M943,370.7 L978.4,370.7 L984,373 L1007,373 L1012,370.7 L1067,370.7 L1072.7,368.6 L1081.7,368.6 L1086.8,363.5 L1098.4,363.5 L1103.5,368.1 L1229.3,368.1 L1233.5,338.2 L1244.3,338.2 L1250,328.5 L1289.3,328.5 L1295.7,303.7 L1385,303.7 L1385,385.3 L943,385.3 Z" fill="url(#gp)"/>
<path d="M943,370.7 L978.4,370.7 L984,373 L1007,373 L1012,370.7 L1067,370.7 L1072.7,368.6 L1081.7,368.6 L1086.8,363.5 L1098.4,363.5 L1103.5,368.1 L1229.3,368.1 L1233.5,338.2 L1244.3,338.2 L1250,328.5 L1289.3,328.5 L1295.7,303.7 L1385,303.7" fill="none" stroke="#d9a2f2" stroke-width="1.6" stroke-linejoin="round"/>
<text x="906.7" y="409" font-family="Liberation Sans" font-size="8.4" fill="#6e9fff" font-weight="400" text-anchor="start" textLength="23.50" lengthAdjust="spacingAndGlyphs" stroke="#6e9fff" stroke-width="0.45">Name</text>
<line x1="885.7" y1="414.5" x2="1392" y2="414.5" stroke="#26282d" stroke-width="1" />
<rect x="891.3" y="420.90000000000003" width="10.5" height="3.2" rx="1.6" fill="#d9a2f2"/>
<text x="906.8" y="425.3" font-family="Liberation Sans" font-size="8.2" fill="#ccccdc" font-weight="400" text-anchor="start" textLength="219.70" lengthAdjust="spacingAndGlyphs" >backend-celery-workers-deployment-b68f88f74-rzq4j</text>
<line x1="885.7" y1="430.5" x2="1392" y2="430.5" stroke="#26282d" stroke-width="1" />
<rect x="4.5" y="442.5" width="344" height="178" rx="2" fill="#181b1f" stroke="#2c2e33" stroke-width="1" />
<text x="10.6" y="456.6" font-family="Liberation Sans" font-size="10.6" fill="#d8d9e3" font-weight="400" text-anchor="start" textLength="82.30" lengthAdjust="spacingAndGlyphs" stroke="#d8d9e3" stroke-width="0.25">Containers status</text>
<line x1="29.6" y1="486.2" x2="337" y2="486.2" stroke="rgba(204,204,220,0.08)" stroke-width="1" />
<line x1="29.6" y1="504.65999999999997" x2="337" y2="504.65999999999997" stroke="rgba(204,204,220,0.08)" stroke-width="1" />
<line x1="29.6" y1="523.12" x2="337" y2="523.12" stroke="rgba(204,204,220,0.08)" stroke-width="1" />
<line x1="29.6" y1="541.58" x2="337" y2="541.58" stroke="rgba(204,204,220,0.08)" stroke-width="1" />
<line x1="29.6" y1="560.04" x2="337" y2="560.04" stroke="rgba(204,204,220,0.08)" stroke-width="1" />
<line x1="29.6" y1="578.5" x2="337" y2="578.5" stroke="rgba(204,204,220,0.08)" stroke-width="1" />
<line x1="94.2" y1="477" x2="94.2" y2="578.5" stroke="rgba(204,204,220,0.08)" stroke-width="1" />
<line x1="196.4" y1="477" x2="196.4" y2="578.5" stroke="rgba(204,204,220,0.08)" stroke-width="1" />
<line x1="298.3" y1="477" x2="298.3" y2="578.5" stroke="rgba(204,204,220,0.08)" stroke-width="1" />
<text x="25.6" y="489.09999999999997" font-family="Liberation Sans" font-size="8.6" fill="#c4c5cf" font-weight="400" text-anchor="end" >1</text>
<text x="25.6" y="507.55999999999995" font-family="Liberation Sans" font-size="8.6" fill="#c4c5cf" font-weight="400" text-anchor="end" >0.8</text>
<text x="25.6" y="526.02" font-family="Liberation Sans" font-size="8.6" fill="#c4c5cf" font-weight="400" text-anchor="end" >0.6</text>
<text x="25.6" y="544.48" font-family="Liberation Sans" font-size="8.6" fill="#c4c5cf" font-weight="400" text-anchor="end" >0.4</text>
<text x="25.6" y="562.9399999999999" font-family="Liberation Sans" font-size="8.6" fill="#c4c5cf" font-weight="400" text-anchor="end" >0.2</text>
<text x="25.6" y="581.4" font-family="Liberation Sans" font-size="8.6" fill="#c4c5cf" font-weight="400" text-anchor="end" >0</text>
<text x="94.2" y="591.3" font-family="Liberation Sans" font-size="8.2" fill="#c4c5cf" font-weight="400" text-anchor="middle" >16:15</text>
<text x="196.4" y="591.3" font-family="Liberation Sans" font-size="8.2" fill="#c4c5cf" font-weight="400" text-anchor="middle" >16:20</text>
<text x="298.3" y="591.3" font-family="Liberation Sans" font-size="8.2" fill="#c4c5cf" font-weight="400" text-anchor="middle" >16:25</text>
<line x1="29.6" y1="486.2" x2="334.5" y2="486.2" stroke="#84a9e6" stroke-width="1.05" />
<line x1="29.6" y1="578.5" x2="334.5" y2="578.5" stroke="#a53d45" stroke-width="1.6" />
<rect x="13" y="604" width="9.5" height="3" rx="1.5" fill="#73bf69"/>
<text x="28.2" y="608.6" font-family="Liberation Sans" font-size="8.4" fill="#ccccdc" font-weight="400" text-anchor="start" textLength="24.60" lengthAdjust="spacingAndGlyphs" >Ready</text>
<rect x="60.8" y="604" width="9.5" height="3" rx="1.5" fill="#fade2a"/>
<text x="75.4" y="608.6" font-family="Liberation Sans" font-size="8.4" fill="#ccccdc" font-weight="400" text-anchor="start" textLength="32.30" lengthAdjust="spacingAndGlyphs" >Running</text>
<rect x="115" y="604" width="9.5" height="3" rx="1.5" fill="#8ab8ff"/>
<text x="130" y="608.6" font-family="Liberation Sans" font-size="8.4" fill="#ccccdc" font-weight="400" text-anchor="start" textLength="32.70" lengthAdjust="spacingAndGlyphs" >Restarts</text>
<rect x="169.8" y="604" width="9.5" height="3" rx="1.5" fill="#ff9830"/>
<text x="184.9" y="608.6" font-family="Liberation Sans" font-size="8.4" fill="#ccccdc" font-weight="400" text-anchor="start" textLength="29.40" lengthAdjust="spacingAndGlyphs" >Waiting</text>
<rect x="222" y="604" width="9.5" height="3" rx="1.5" fill="#f2495c"/>
<text x="236.9" y="608.6" font-family="Liberation Sans" font-size="8.4" fill="#ccccdc" font-weight="400" text-anchor="start" textLength="44.50" lengthAdjust="spacingAndGlyphs" >Terminated</text>
<rect x="355.5" y="442.5" width="519" height="178" rx="2" fill="#181b1f" stroke="#2c2e33" stroke-width="1" />
<text x="361.6" y="456.6" font-family="Liberation Sans" font-size="10.6" fill="#d8d9e3" font-weight="400" text-anchor="start" textLength="198.40" lengthAdjust="spacingAndGlyphs" stroke="#d8d9e3" stroke-width="0.25">CPU Usage from Requests &amp; Limits by Pod</text>
<rect x="408.1" y="476.7" width="454.29999999999995" height="26.80000000000001" fill="#fade2a" fill-opacity="0.15"/>
<rect x="408.1" y="503.5" width="454.29999999999995" height="63.799999999999955" fill="#73bf69" fill-opacity="0.15"/>
<path d="M408.3,488.8 C440,485 470,482.6 503.4,482.6 L650,482.6 C690,482.6 720,492 806.4,507.4 L806.4,567.3 L408.1,567.3 Z" fill="url(#gb2)"/>
<line x1="408.1" y1="476.7" x2="862.4" y2="476.7" stroke="rgba(204,204,220,0.08)" stroke-width="1" />
<line x1="408.1" y1="494.82" x2="862.4" y2="494.82" stroke="rgba(204,204,220,0.08)" stroke-width="1" />
<line x1="408.1" y1="512.9399999999999" x2="862.4" y2="512.9399999999999" stroke="rgba(204,204,220,0.08)" stroke-width="1" />
<line x1="408.1" y1="531.06" x2="862.4" y2="531.06" stroke="rgba(204,204,220,0.08)" stroke-width="1" />
<line x1="408.1" y1="549.18" x2="862.4" y2="549.18" stroke="rgba(204,204,220,0.08)" stroke-width="1" />
<line x1="408.1" y1="567.3" x2="862.4" y2="567.3" stroke="rgba(204,204,220,0.08)" stroke-width="1" />
<line x1="503.4" y1="476.7" x2="503.4" y2="567.3" stroke="rgba(204,204,220,0.08)" stroke-width="1" />
<line x1="654.7" y1="476.7" x2="654.7" y2="567.3" stroke="rgba(204,204,220,0.08)" stroke-width="1" />
<line x1="806.4" y1="476.7" x2="806.4" y2="567.3" stroke="rgba(204,204,220,0.08)" stroke-width="1" />
<path d="M408.3,488.8 C440,485 470,482.6 503.4,482.6 L650,482.6 C690,482.6 720,492 806.4,507.4" fill="none" stroke="#8ab8ff" stroke-width="1.6"/>
<text x="404.1" y="479.59999999999997" font-family="Liberation Sans" font-size="8.6" fill="#c4c5cf" font-weight="400" text-anchor="end" >100%</text>
<text x="404.1" y="497.71999999999997" font-family="Liberation Sans" font-size="8.6" fill="#c4c5cf" font-weight="400" text-anchor="end" >80%</text>
<text x="404.1" y="515.8399999999999" font-family="Liberation Sans" font-size="8.6" fill="#c4c5cf" font-weight="400" text-anchor="end" >60%</text>
<text x="404.1" y="533.9599999999999" font-family="Liberation Sans" font-size="8.6" fill="#c4c5cf" font-weight="400" text-anchor="end" >40%</text>
<text x="404.1" y="552.0799999999999" font-family="Liberation Sans" font-size="8.6" fill="#c4c5cf" font-weight="400" text-anchor="end" >20%</text>
<text x="404.1" y="570.1999999999999" font-family="Liberation Sans" font-size="8.6" fill="#c4c5cf" font-weight="400" text-anchor="end" >0%</text>
<text x="503.4" y="580.4" font-family="Liberation Sans" font-size="8.2" fill="#c4c5cf" font-weight="400" text-anchor="middle" >16:15</text>
<text x="654.7" y="580.4" font-family="Liberation Sans" font-size="8.2" fill="#c4c5cf" font-weight="400" text-anchor="middle" >16:20</text>
<text x="806.4" y="580.4" font-family="Liberation Sans" font-size="8.2" fill="#c4c5cf" font-weight="400" text-anchor="middle" >16:25</text>
<text x="364.3" y="521.5" font-family="Liberation Sans" font-size="9.0" fill="#c4c5cf" text-anchor="middle" transform="rotate(-90 364.3 521.5)" dy="2.9">Percent</text>
<text x="381.7" y="592.9" font-family="Liberation Sans" font-size="8.4" fill="#6e9fff" font-weight="400" text-anchor="start" textLength="23.50" lengthAdjust="spacingAndGlyphs" stroke="#6e9fff" stroke-width="0.45">Name</text>
<line x1="360.7" y1="598.5" x2="868" y2="598.5" stroke="#26282d" stroke-width="1" />
<rect x="366.3" y="604.4" width="10.5" height="3.2" rx="1.6" fill="#8ab8ff"/>
<text x="381.8" y="608.8" font-family="Liberation Sans" font-size="8.2" fill="#ccccdc" font-weight="400" text-anchor="start" textLength="276.70" lengthAdjust="spacingAndGlyphs" >REQUESTS % backend-celery-workers-deployment-b68f88f74-rzq4j</text>
<line x1="360.7" y1="614.5" x2="868" y2="614.5" stroke="#26282d" stroke-width="1" />
<rect x="880.5" y="442.5" width="518" height="178" rx="2" fill="#181b1f" stroke="#2c2e33" stroke-width="1" />
<text x="886.6" y="456.6" font-family="Liberation Sans" font-size="10.6" fill="#d8d9e3" font-weight="400" text-anchor="start" textLength="245.20" lengthAdjust="spacingAndGlyphs" stroke="#d8d9e3" stroke-width="0.25">Memory Usage from Requests &amp; Limits by Container</text>
<rect x="933.6" y="476.7" width="453.19999999999993" height="26.80000000000001" fill="#fade2a" fill-opacity="0.15"/>
<rect x="933.6" y="503.5" width="453.19999999999993" height="63.799999999999955" fill="#73bf69" fill-opacity="0.15"/>
<path d="M933.6,485.4 L1384,485.4 L1384,567.3 L933.6,567.3 Z" fill="url(#gp2)"/>
<line x1="933.6" y1="476.7" x2="1386.8" y2="476.7" stroke="rgba(204,204,220,0.08)" stroke-width="1" />
<line x1="933.6" y1="494.82" x2="1386.8" y2="494.82" stroke="rgba(204,204,220,0.08)" stroke-width="1" />
<line x1="933.6" y1="512.9399999999999" x2="1386.8" y2="512.9399999999999" stroke="rgba(204,204,220,0.08)" stroke-width="1" />
<line x1="933.6" y1="531.06" x2="1386.8" y2="531.06" stroke="rgba(204,204,220,0.08)" stroke-width="1" />
<line x1="933.6" y1="549.18" x2="1386.8" y2="549.18" stroke="rgba(204,204,220,0.08)" stroke-width="1" />
<line x1="933.6" y1="567.3" x2="1386.8" y2="567.3" stroke="rgba(204,204,220,0.08)" stroke-width="1" />
<line x1="1028.4" y1="476.7" x2="1028.4" y2="567.3" stroke="rgba(204,204,220,0.08)" stroke-width="1" />
<line x1="1179.8" y1="476.7" x2="1179.8" y2="567.3" stroke="rgba(204,204,220,0.08)" stroke-width="1" />
<line x1="1331.3" y1="476.7" x2="1331.3" y2="567.3" stroke="rgba(204,204,220,0.08)" stroke-width="1" />
<path d="M933.6,485.4 L1384,485.4" fill="none" stroke="#d9a2f2" stroke-width="1.6"/>
<text x="929.6" y="479.59999999999997" font-family="Liberation Sans" font-size="8.6" fill="#c4c5cf" font-weight="400" text-anchor="end" >100%</text>
<text x="929.6" y="497.71999999999997" font-family="Liberation Sans" font-size="8.6" fill="#c4c5cf" font-weight="400" text-anchor="end" >80%</text>
<text x="929.6" y="515.8399999999999" font-family="Liberation Sans" font-size="8.6" fill="#c4c5cf" font-weight="400" text-anchor="end" >60%</text>
<text x="929.6" y="533.9599999999999" font-family="Liberation Sans" font-size="8.6" fill="#c4c5cf" font-weight="400" text-anchor="end" >40%</text>
<text x="929.6" y="552.0799999999999" font-family="Liberation Sans" font-size="8.6" fill="#c4c5cf" font-weight="400" text-anchor="end" >20%</text>
<text x="929.6" y="570.1999999999999" font-family="Liberation Sans" font-size="8.6" fill="#c4c5cf" font-weight="400" text-anchor="end" >0%</text>
<text x="1028.4" y="580.4" font-family="Liberation Sans" font-size="8.2" fill="#c4c5cf" font-weight="400" text-anchor="middle" >16:15</text>
<text x="1179.8" y="580.4" font-family="Liberation Sans" font-size="8.2" fill="#c4c5cf" font-weight="400" text-anchor="middle" >16:20</text>
<text x="1331.3" y="580.4" font-family="Liberation Sans" font-size="8.2" fill="#c4c5cf" font-weight="400" text-anchor="middle" >16:25</text>
<text x="889.3" y="521.5" font-family="Liberation Sans" font-size="9.0" fill="#c4c5cf" text-anchor="middle" transform="rotate(-90 889.3 521.5)" dy="2.9">Percent</text>
<text x="906.7" y="592.9" font-family="Liberation Sans" font-size="8.4" fill="#6e9fff" font-weight="400" text-anchor="start" textLength="23.50" lengthAdjust="spacingAndGlyphs" stroke="#6e9fff" stroke-width="0.45">Name</text>
<line x1="885.7" y1="598.5" x2="1392" y2="598.5" stroke="#26282d" stroke-width="1" />
<rect x="891.3" y="604.4" width="10.5" height="3.2" rx="1.6" fill="#d9a2f2"/>
<text x="906.8" y="608.8" font-family="Liberation Sans" font-size="8.2" fill="#ccccdc" font-weight="400" text-anchor="start" textLength="186.70" lengthAdjust="spacingAndGlyphs" >backend-celery-workers-container REQUESTS</text>
<line x1="885.7" y1="614.5" x2="1392" y2="614.5" stroke="#26282d" stroke-width="1" /></svg>
</body></html>
